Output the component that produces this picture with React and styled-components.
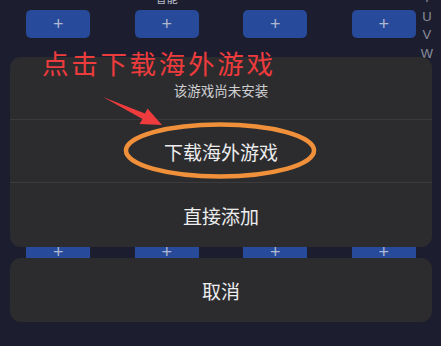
import React from "react";
import styled, { createGlobalStyle } from "styled-components";

const GlobalStyle = createGlobalStyle`
  html, body {
    margin: 0;
    padding: 0;
    background: #1c1e30;
  }
  * {
    box-sizing: border-box;
  }
`;

const Screen = styled.div`
  position: relative;
  width: 441px;
  height: 346px;
  overflow: hidden;
  background: #1c1e30;
  font-family: "Noto Sans CJK SC", "Noto Sans", sans-serif;
`;

const Board = styled.div`
  margin-top: -9px;
  padding: 0 3px 0 4px;
  display: grid;
  grid-template-columns: repeat(4, 1fr);
  row-gap: 29px;
`;

const Cell = styled.div`
  display: flex;
  flex-direction: column;
  align-items: center;
`;

const Label = styled.div`
  height: 14px;
  line-height: 14px;
  margin-bottom: 5px;
  font-size: 11px;
  color: #b9bcc8;
`;

const AddButton = styled.div`
  width: 64px;
  height: 28px;
  border-radius: 5px;
  background: #284a9b;
  display: flex;
  align-items: center;
  justify-content: center;
  color: #aeb8d0;
  font-family: "Liberation Sans", sans-serif;
  font-size: 18px;
  line-height: 1;
`;

const IndexBar = styled.div`
  position: absolute;
  top: -11px;
  right: 8px;
  display: flex;
  flex-direction: column;
  align-items: center;
  font-family: "Liberation Sans", sans-serif;
  font-size: 13px;
  line-height: 18.5px;
  color: #8b8e9b;
`;

const Sheet = styled.div`
  position: absolute;
  top: 57px;
  left: 10px;
  right: 9px;
  display: flex;
  flex-direction: column;
  gap: 11px;
`;

const Group = styled.div`
  background: #2c2c2e;
  border-radius: 11px;
  overflow: hidden;
  display: flex;
  flex-direction: column;
`;

const Title = styled.div`
  height: 63px;
  padding-top: 4px;
  display: flex;
  align-items: center;
  justify-content: center;
  border-bottom: 1px solid #3b3b3e;
  font-size: 13.5px;
  color: #cfcfd2;
`;

const Action = styled.div`
  height: ${(p) => p.$h}px;
  display: flex;
  align-items: center;
  justify-content: center;
  border-bottom: ${(p) => (p.$last ? "none" : "1px solid #3b3b3e")};
  font-size: 19px;
  color: #ededee;
`;

const Cancel = styled(Group)`
  height: 64px;
  align-items: center;
  justify-content: center;
  font-size: 19px;
  color: #ededee;
`;

const Marks = styled.svg`
  position: absolute;
  inset: 0;
  pointer-events: none;
`;

const Callout = styled.div`
  position: absolute;
  top: 50px;
  left: 42px;
  font-size: 26.5px;
  line-height: 26px;
  letter-spacing: 2.7px;
  color: #ee3b3d;
  white-space: nowrap;
`;

const rows = [
  ["", "智能", "", ""],
  ["", "", "", ""],
  ["", "", "", ""],
  ["", "", "", ""],
];

const letters = ["T", "U", "V", "W", "X", "Y", "Z"];

export default function App() {
  return (
    <>
      <GlobalStyle />
      <Screen>
        <Board>
          {rows.flat().map((label, i) => (
            <Cell key={i}>
              <Label>{label}</Label>
              <AddButton>+</AddButton>
            </Cell>
          ))}
        </Board>

        <IndexBar>
          {letters.map((l) => (
            <span key={l}>{l}</span>
          ))}
        </IndexBar>

        <Sheet>
          <Group>
            <Title>该游戏尚未安装</Title>
            <Action $h={63}>下载海外游戏</Action>
            <Action $h={64} $last>
              直接添加
            </Action>
          </Group>
          <Cancel>取消</Cancel>
        </Sheet>

        <Marks width="441" height="346" viewBox="0 0 441 346">
          <polygon
            points="103,97 145,113.5 147.5,108.5 162,125 139.5,124 142.5,119"
            fill="#ee3b3d"
          />
          <ellipse
            cx="220"
            cy="150.5"
            rx="94"
            ry="26"
            fill="none"
            stroke="#f0903a"
            strokeWidth="4.5"
          />
        </Marks>

        <Callout>点击下载海外游戏</Callout>
      </Screen>
    </>
  );
}
